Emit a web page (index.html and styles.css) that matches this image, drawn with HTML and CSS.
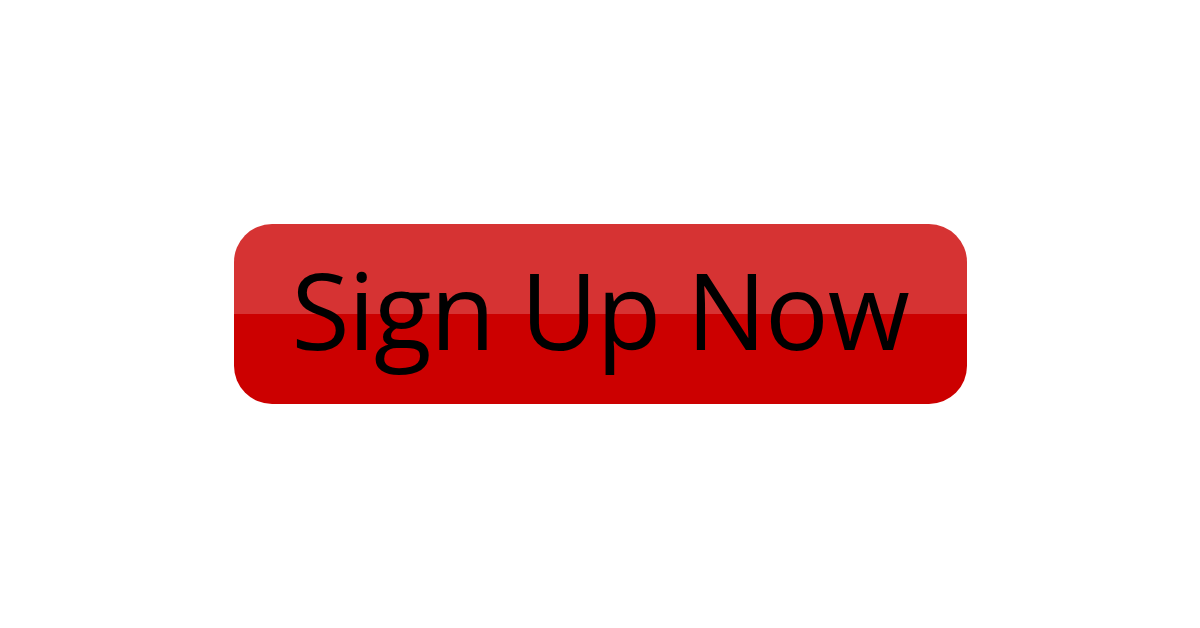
FILE: index.html
```html
<!DOCTYPE html>
<html>
<head>
<meta charset="utf-8">
<link rel="stylesheet" href="styles.css">
</head>
<body>
<div class="stage">
  <a class="signup" href="#"><span class="label">Sign Up Now</span></a>
</div>
</body>
</html>
```
FILE: styles.css
```css
html, body {
  margin: 0;
  padding: 0;
  background: #ffffff;
}
.stage {
  width: 1200px;
  height: 628px;
  display: flex;
  align-items: center;
  justify-content: center;
}
.signup {
  box-sizing: border-box;
  width: 733px;
  height: 180px;
  padding-bottom: 10px;
  border-radius: 38px;
  background: linear-gradient(to bottom, #d63333 0, #d63333 90px, #cc0000 90px, #cc0000 100%);
  display: flex;
  align-items: center;
  justify-content: center;
  text-decoration: none;
}
.label {
  font-family: "Open Sans", "Liberation Sans", sans-serif;
  font-size: 106px;
  color: #000000;
  line-height: 1;
  letter-spacing: -1.2px;
}
```
